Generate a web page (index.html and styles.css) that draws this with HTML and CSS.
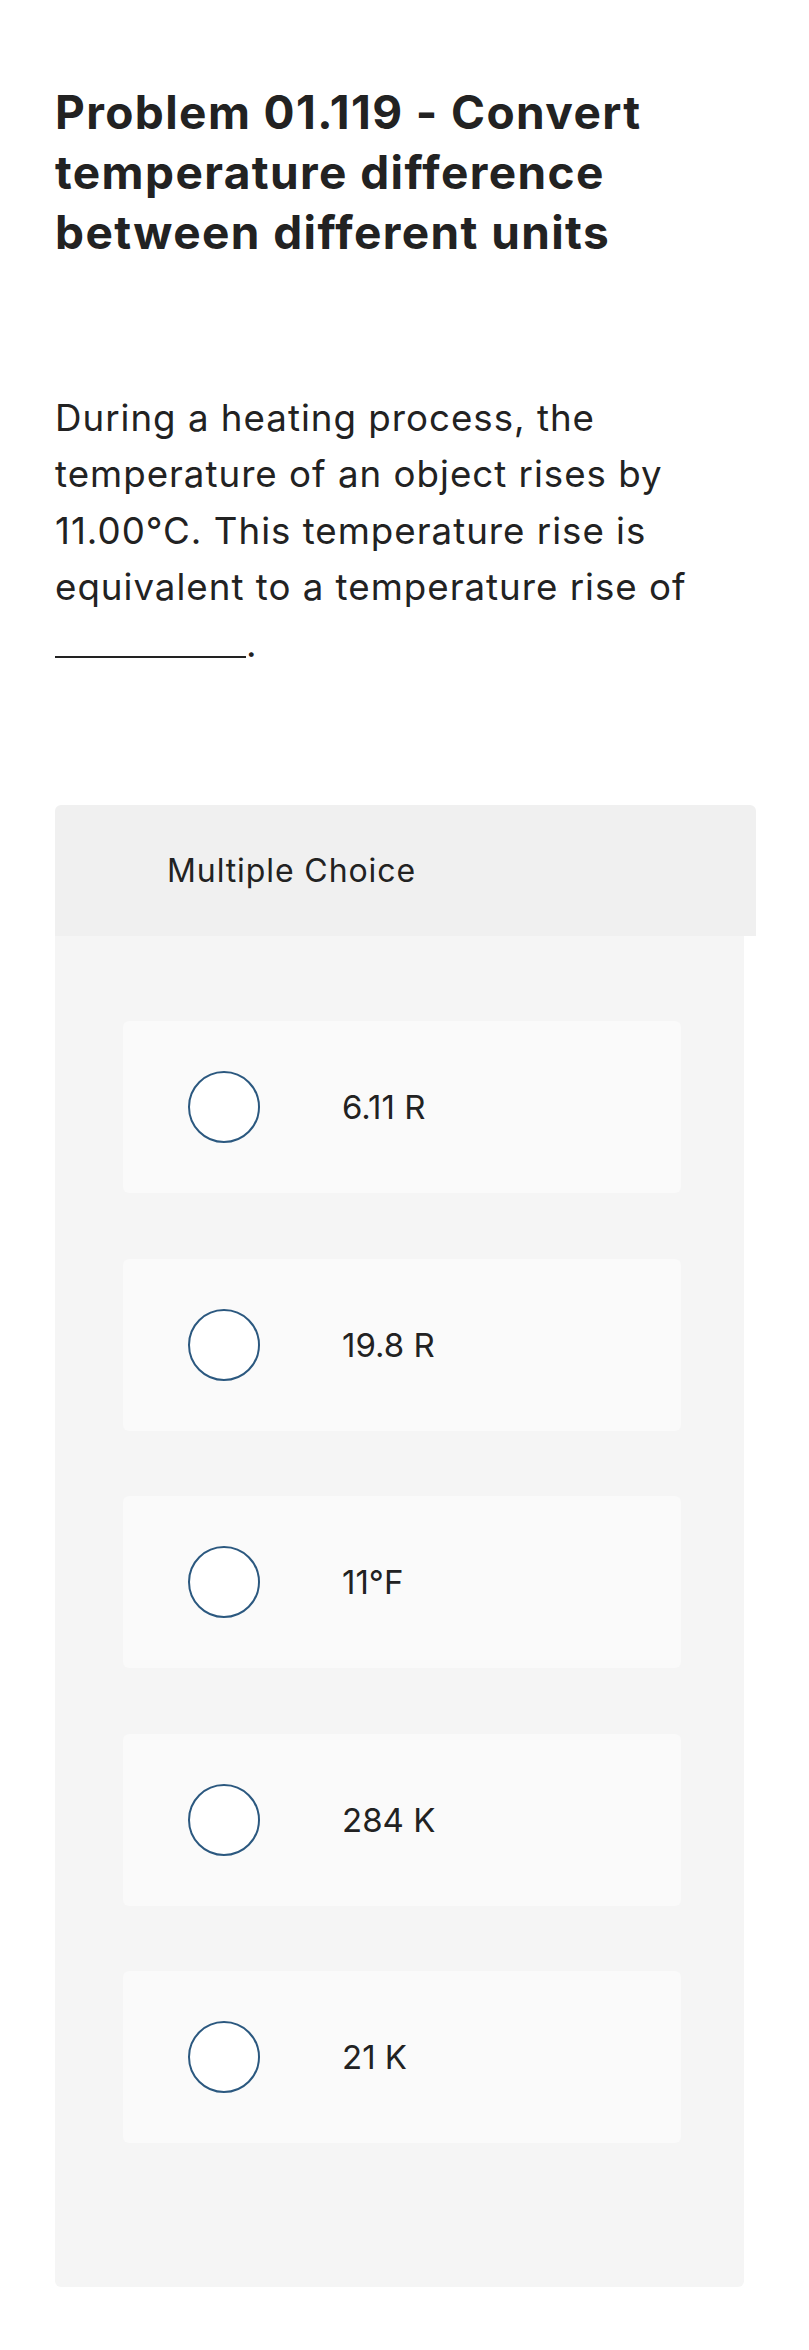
FILE: index.html
```html
<!DOCTYPE html>
<html lang="en">
<head>
<meta charset="utf-8">
<title>Problem 01.119</title>
<link rel="stylesheet" href="styles.css">
</head>
<body>
<main class="page">
  <h1 class="title">Problem 01.119 - Convert temperature difference between different units</h1>
  <p class="question">During a heating process, the temperature of an object rises by 11.00°C. This temperature rise is equivalent to a temperature rise of <span class="blank"></span>.</p>
  <section class="mc">
    <div class="mc-head">Multiple Choice</div>
    <div class="mc-body">
      <div class="option"><span class="radio"></span><span class="label">6.11 R</span></div>
      <div class="option"><span class="radio"></span><span class="label">19.8 R</span></div>
      <div class="option"><span class="radio"></span><span class="label">11°F</span></div>
      <div class="option"><span class="radio"></span><span class="label">284 K</span></div>
      <div class="option"><span class="radio"></span><span class="label">21 K</span></div>
    </div>
  </section>
</main>
</body>
</html>
```
FILE: styles.css
```css
html, body {
  margin: 0;
  padding: 0;
  background: #ffffff;
}
body {
  font-family: Inter, "Open Sans", "Liberation Sans", sans-serif;
  color: #222222;
}
.page {
  padding: 82px 53px 0 55px;
}
.title {
  margin: 0;
  font-size: 46px;
  line-height: 60px;
  font-weight: 700;
  letter-spacing: 1.4px;
  color: #222222;
}
.question {
  margin: 128px 0 0 0;
  font-size: 36.7px;
  line-height: 56.4px;
  font-weight: 400;
  letter-spacing: 1px;
}
.blank {
  display: inline-block;
  width: 191px;
  border-bottom: 2px solid #222222;
  vertical-align: -1px;
}
.mc {
  margin-top: 133px;
  width: 701px;
}
.mc-head {
  height: 131px;
  box-sizing: border-box;
  display: flex;
  align-items: center;
  padding-left: 112px;
  background: #f0f0f0;
  border-radius: 6px 6px 0 0;
  font-size: 32px;
  letter-spacing: 0.9px;
}
.mc-body {
  width: 689px;
  box-sizing: border-box;
  background: #f5f5f5;
  border-radius: 0 0 6px 6px;
  padding: 85px 63px 144px 68px;
  display: flex;
  flex-direction: column;
  gap: 65.5px;
}
.option {
  height: 172px;
  background: #fafafa;
  border-radius: 6px;
  display: flex;
  align-items: center;
  padding-left: 65px;
}
.radio {
  width: 72px;
  height: 72px;
  box-sizing: border-box;
  border: 2px solid #2b587f;
  border-radius: 50%;
  background: #ffffff;
  flex: none;
}
.label {
  margin-left: 82px;
  font-size: 33px;
}
```
